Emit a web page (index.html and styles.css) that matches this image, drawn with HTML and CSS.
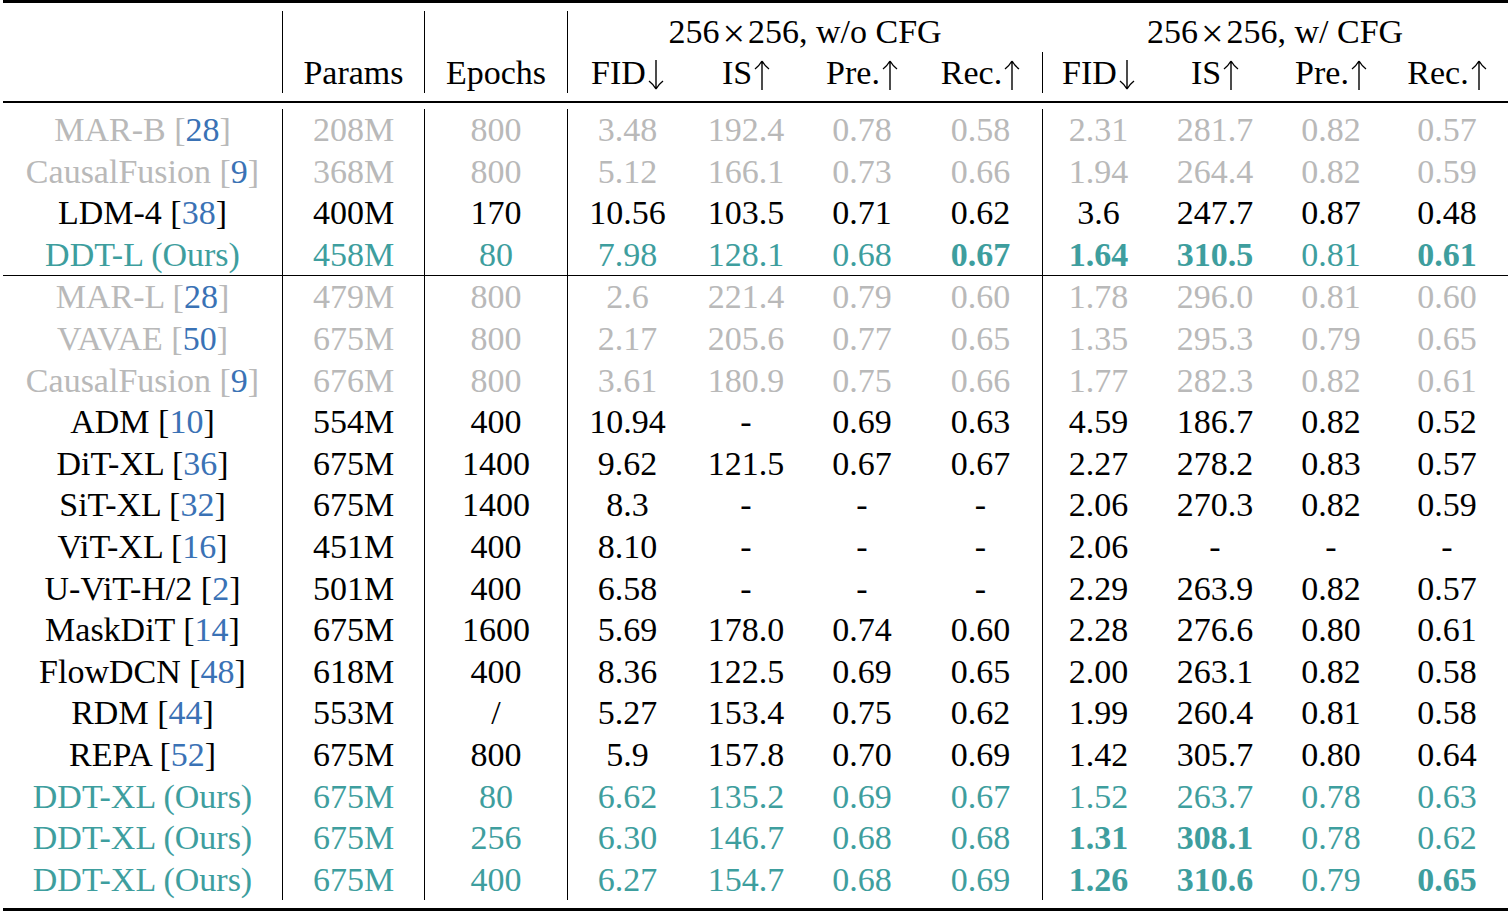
FILE: index.html
```html
<!DOCTYPE html>
<html>
<head>
<meta charset="utf-8">
<link rel="stylesheet" href="styles.css">
</head>
<body>
<div class="table">
  <div class="rule-top"></div>
  <div class="hdr">
    <div class="h-name"></div>
    <div class="h-span v">Params</div>
    <div class="h-span v col3">Epochs</div>
    <div class="h-grp1 v">256<span class="times">×</span>256, w/o CFG</div>
    <div class="h-grp2">256<span class="times">×</span>256, w/ CFG</div>
    <div class="h-m v m4">FID<svg class="arr" viewBox="0 0 16 30"><path d="M8 29V0M8 29Q5 24 1 21M8 29Q11 24 15 21"/></svg></div>
    <div class="h-m m5">IS<svg class="arr" viewBox="0 0 16 30"><path d="M8 1V30M8 1Q5 6 1 9M8 1Q11 6 15 9"/></svg></div>
    <div class="h-m m6">Pre.<svg class="arr" viewBox="0 0 16 30"><path d="M8 1V30M8 1Q5 6 1 9M8 1Q11 6 15 9"/></svg></div>
    <div class="h-m m7">Rec.<svg class="arr" viewBox="0 0 16 30"><path d="M8 1V30M8 1Q5 6 1 9M8 1Q11 6 15 9"/></svg></div>
    <div class="h-m v m8">FID<svg class="arr" viewBox="0 0 16 30"><path d="M8 29V0M8 29Q5 24 1 21M8 29Q11 24 15 21"/></svg></div>
    <div class="h-m m9">IS<svg class="arr" viewBox="0 0 16 30"><path d="M8 1V30M8 1Q5 6 1 9M8 1Q11 6 15 9"/></svg></div>
    <div class="h-m m10">Pre.<svg class="arr" viewBox="0 0 16 30"><path d="M8 1V30M8 1Q5 6 1 9M8 1Q11 6 15 9"/></svg></div>
    <div class="h-m m11">Rec.<svg class="arr" viewBox="0 0 16 30"><path d="M8 1V30M8 1Q5 6 1 9M8 1Q11 6 15 9"/></svg></div>
  </div>
  <div class="rule-mid"></div>
  <div class="body">
    <div class="row gray"><div class="c">MAR-B [<span class="cite">28</span>]</div><div class="c v">208M</div><div class="c v">800</div><div class="c v">3.48</div><div class="c">192.4</div><div class="c">0.78</div><div class="c">0.58</div><div class="c v">2.31</div><div class="c">281.7</div><div class="c">0.82</div><div class="c">0.57</div></div>
    <div class="row gray"><div class="c">CausalFusion [<span class="cite">9</span>]</div><div class="c v">368M</div><div class="c v">800</div><div class="c v">5.12</div><div class="c">166.1</div><div class="c">0.73</div><div class="c">0.66</div><div class="c v">1.94</div><div class="c">264.4</div><div class="c">0.82</div><div class="c">0.59</div></div>
    <div class="row"><div class="c">LDM-4 [<span class="cite">38</span>]</div><div class="c v">400M</div><div class="c v">170</div><div class="c v">10.56</div><div class="c">103.5</div><div class="c">0.71</div><div class="c">0.62</div><div class="c v">3.6</div><div class="c">247.7</div><div class="c">0.87</div><div class="c">0.48</div></div>
    <div class="row teal"><div class="c">DDT-L (Ours)</div><div class="c v">458M</div><div class="c v">80</div><div class="c v">7.98</div><div class="c">128.1</div><div class="c">0.68</div><div class="c b">0.67</div><div class="c v b">1.64</div><div class="c b">310.5</div><div class="c">0.81</div><div class="c b">0.61</div></div>
    <div class="rule-sep"></div>
    <div class="row gray"><div class="c">MAR-L [<span class="cite">28</span>]</div><div class="c v">479M</div><div class="c v">800</div><div class="c v">2.6</div><div class="c">221.4</div><div class="c">0.79</div><div class="c">0.60</div><div class="c v">1.78</div><div class="c">296.0</div><div class="c">0.81</div><div class="c">0.60</div></div>
    <div class="row gray"><div class="c">VAVAE [<span class="cite">50</span>]</div><div class="c v">675M</div><div class="c v">800</div><div class="c v">2.17</div><div class="c">205.6</div><div class="c">0.77</div><div class="c">0.65</div><div class="c v">1.35</div><div class="c">295.3</div><div class="c">0.79</div><div class="c">0.65</div></div>
    <div class="row gray"><div class="c">CausalFusion [<span class="cite">9</span>]</div><div class="c v">676M</div><div class="c v">800</div><div class="c v">3.61</div><div class="c">180.9</div><div class="c">0.75</div><div class="c">0.66</div><div class="c v">1.77</div><div class="c">282.3</div><div class="c">0.82</div><div class="c">0.61</div></div>
    <div class="row"><div class="c">ADM [<span class="cite">10</span>]</div><div class="c v">554M</div><div class="c v">400</div><div class="c v">10.94</div><div class="c">-</div><div class="c">0.69</div><div class="c">0.63</div><div class="c v">4.59</div><div class="c">186.7</div><div class="c">0.82</div><div class="c">0.52</div></div>
    <div class="row"><div class="c">DiT-XL [<span class="cite">36</span>]</div><div class="c v">675M</div><div class="c v">1400</div><div class="c v">9.62</div><div class="c">121.5</div><div class="c">0.67</div><div class="c">0.67</div><div class="c v">2.27</div><div class="c">278.2</div><div class="c">0.83</div><div class="c">0.57</div></div>
    <div class="row"><div class="c">SiT-XL [<span class="cite">32</span>]</div><div class="c v">675M</div><div class="c v">1400</div><div class="c v">8.3</div><div class="c">-</div><div class="c">-</div><div class="c">-</div><div class="c v">2.06</div><div class="c">270.3</div><div class="c">0.82</div><div class="c">0.59</div></div>
    <div class="row"><div class="c">ViT-XL [<span class="cite">16</span>]</div><div class="c v">451M</div><div class="c v">400</div><div class="c v">8.10</div><div class="c">-</div><div class="c">-</div><div class="c">-</div><div class="c v">2.06</div><div class="c">-</div><div class="c">-</div><div class="c">-</div></div>
    <div class="row"><div class="c">U-ViT-H/2 [<span class="cite">2</span>]</div><div class="c v">501M</div><div class="c v">400</div><div class="c v">6.58</div><div class="c">-</div><div class="c">-</div><div class="c">-</div><div class="c v">2.29</div><div class="c">263.9</div><div class="c">0.82</div><div class="c">0.57</div></div>
    <div class="row"><div class="c">MaskDiT [<span class="cite">14</span>]</div><div class="c v">675M</div><div class="c v">1600</div><div class="c v">5.69</div><div class="c">178.0</div><div class="c">0.74</div><div class="c">0.60</div><div class="c v">2.28</div><div class="c">276.6</div><div class="c">0.80</div><div class="c">0.61</div></div>
    <div class="row"><div class="c">FlowDCN [<span class="cite">48</span>]</div><div class="c v">618M</div><div class="c v">400</div><div class="c v">8.36</div><div class="c">122.5</div><div class="c">0.69</div><div class="c">0.65</div><div class="c v">2.00</div><div class="c">263.1</div><div class="c">0.82</div><div class="c">0.58</div></div>
    <div class="row"><div class="c">RDM [<span class="cite">44</span>]</div><div class="c v">553M</div><div class="c v">/</div><div class="c v">5.27</div><div class="c">153.4</div><div class="c">0.75</div><div class="c">0.62</div><div class="c v">1.99</div><div class="c">260.4</div><div class="c">0.81</div><div class="c">0.58</div></div>
    <div class="row"><div class="c">REPA [<span class="cite">52</span>]</div><div class="c v">675M</div><div class="c v">800</div><div class="c v">5.9</div><div class="c">157.8</div><div class="c">0.70</div><div class="c">0.69</div><div class="c v">1.42</div><div class="c">305.7</div><div class="c">0.80</div><div class="c">0.64</div></div>
    <div class="row teal"><div class="c">DDT-XL (Ours)</div><div class="c v">675M</div><div class="c v">80</div><div class="c v">6.62</div><div class="c">135.2</div><div class="c">0.69</div><div class="c">0.67</div><div class="c v">1.52</div><div class="c">263.7</div><div class="c">0.78</div><div class="c">0.63</div></div>
    <div class="row teal"><div class="c">DDT-XL (Ours)</div><div class="c v">675M</div><div class="c v">256</div><div class="c v">6.30</div><div class="c">146.7</div><div class="c">0.68</div><div class="c">0.68</div><div class="c v b">1.31</div><div class="c b">308.1</div><div class="c">0.78</div><div class="c">0.62</div></div>
    <div class="row teal"><div class="c">DDT-XL (Ours)</div><div class="c v">675M</div><div class="c v">400</div><div class="c v">6.27</div><div class="c">154.7</div><div class="c">0.68</div><div class="c">0.69</div><div class="c v b">1.26</div><div class="c b">310.6</div><div class="c">0.79</div><div class="c b">0.65</div></div>
  </div>
  <div class="rule-bot"></div>
</div>
</body>
</html>
```

FILE: styles.css
```css
html, body {
  margin: 0;
  padding: 0;
  background: #fff;
}
body {
  font-family: "Liberation Serif", "Times New Roman", serif;
  font-size: 34px;
  color: #000;
}
.table {
  width: 1505px;
  margin-left: 3px;
  --cols: 279px 142px 143px 120px 118px 114px 123px 112px 122px 110px 122px;
}
.rule-top {
  height: 3px;
  background: #000;
}
.rule-mid {
  height: 2px;
  background: #000;
  margin-top: 8px;
}
.rule-sep {
  height: 1px;
  background: #000;
}
.rule-bot {
  height: 3px;
  background: #000;
  margin-top: 8px;
}
.hdr {
  display: grid;
  grid-template-columns: var(--cols);
  grid-template-rows: 41px 41px;
  margin-top: 8px;
  line-height: 41px;
}
.hdr > div {
  text-align: center;
  white-space: nowrap;
}
.times {
  font-size: 40px;
  line-height: 0;
  margin: 0 3px;
  vertical-align: -4px;
}
.arr {
  display: inline-block;
  width: 16px;
  height: 30px;
  margin-left: 2px;
  vertical-align: -6px;
  fill: none;
  stroke: #000;
  stroke-width: 1.4;
}
.v {
  border-left: 1px solid #000;
}
.h-name {
  grid-column: 1;
  grid-row: 1 / 3;
}
.h-span {
  grid-column: 2;
  grid-row: 1 / 3;
  display: flex;
  align-items: flex-end;
  justify-content: center;
}
.h-span.col3 {
  grid-column: 3;
}
.h-grp1 {
  grid-column: 4 / 8;
  grid-row: 1;
}
.h-grp2 {
  grid-column: 8 / 12;
  grid-row: 1;
}
.h-m { grid-row: 2; }
.m4 { grid-column: 4; }
.m5 { grid-column: 5; }
.m6 { grid-column: 6; }
.m7 { grid-column: 7; }
.m8 { grid-column: 8; }
.m9 { grid-column: 9; }
.m10 { grid-column: 10; }
.m11 { grid-column: 11; }
.body {
  margin-top: 6px;
}
.row {
  display: grid;
  grid-template-columns: var(--cols);
  height: 41.6px;
  line-height: 41.6px;
}
.c {
  text-align: center;
  white-space: nowrap;
}
.gray { color: #b9b9b9; }
.teal { color: #3e9e9e; }
.b { font-weight: bold; }
.cite { color: #3a72b5; }
```
